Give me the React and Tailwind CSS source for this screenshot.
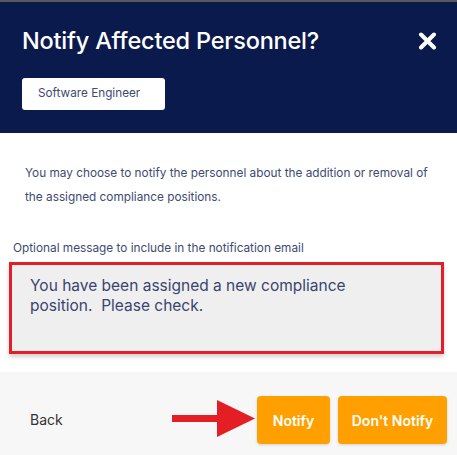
import React, { useState } from 'react';

const App = () => {
  const [message, setMessage] = useState('You have been assigned a new compliance\nposition.  Please check.');

  return (
    <div className="w-[457px] h-[455px] bg-white overflow-hidden font-['Inter',sans-serif]">
      <div className="h-[2px] bg-[#5a5a5a]" />
      {/* header */}
      <div className="h-[131px] bg-[#0b1a4c] px-[22px] pt-[24px]">
        <div className="flex items-center justify-between">
          <h1 className="text-[23.5px] leading-[30px] font-medium text-white tracking-[-0.2px]">Notify Affected Personnel?</h1>
          <svg width="19" height="18" viewBox="0 0 19 18" className="mr-[-2px]">
            <path d="M3 2.5 L16 15.5 M16 2.5 L3 15.5" stroke="#fff" strokeWidth="4" strokeLinecap="round" />
          </svg>
        </div>
        <div className="mt-[22px] w-[143px] h-[32px] bg-white rounded-[3px] flex items-center pl-[16px]">
          <span className="text-[11.75px] text-[#3d4a72]">Software Engineer</span>
        </div>
      </div>

      {/* body */}
      <div className="pt-[28px] pl-[25px]">
        <p className="w-[410px] text-[11.8px] leading-[24px] text-[#3d4a72]">
          You may choose to notify the personnel about the addition or removal of the assigned compliance positions.
        </p>
      </div>
      <div className="px-[9px] mt-[32px]">
        <label className="block pl-[4px] text-[11.8px] leading-[14px] text-[#3d4a72]">Optional message to include in the notification email</label>
        <textarea
          value={message}
          onChange={(e) => setMessage(e.target.value)}
          className="mt-[7px] block w-[435px] h-[92px] border-[3px] border-[#e41e24] bg-[#efefef] pl-[18px] pr-[18px] pt-[11px] text-[15.5px] leading-[20px] text-[#3a4570] resize-none outline-none shadow-[0_3px_4px_rgba(0,0,0,0.18)]"
        />
      </div>

      {/* footer */}
      <div className="mt-[18px] h-[83px] bg-[#f7f7f7] flex items-start pt-[24px] pl-[30px] pr-[10px]">
        <span className="mt-[14px] text-[14px] leading-[20px] text-[#333]">Back</span>
        <div className="flex-1" />
        <svg width="84" height="38" viewBox="0 0 84 38" className="mt-[4px] mr-[1px]">
          <rect x="0" y="15" width="46" height="7" fill="#e31e24" />
          <polygon points="45,0 83,18.5 45,37" fill="#e31e24" />
        </svg>
        <button className="w-[73px] h-[48px] bg-[#ffa000] rounded-[4px] text-white text-[14px] font-semibold shadow-[0_1px_3px_rgba(0,0,0,0.15)]">Notify</button>
        <button className="ml-[8px] w-[109px] h-[48px] bg-[#ffa000] rounded-[4px] text-white text-[14px] font-semibold shadow-[0_1px_3px_rgba(0,0,0,0.15)]">Don't Notify</button>
      </div>
    </div>
  );
};

export default App;
